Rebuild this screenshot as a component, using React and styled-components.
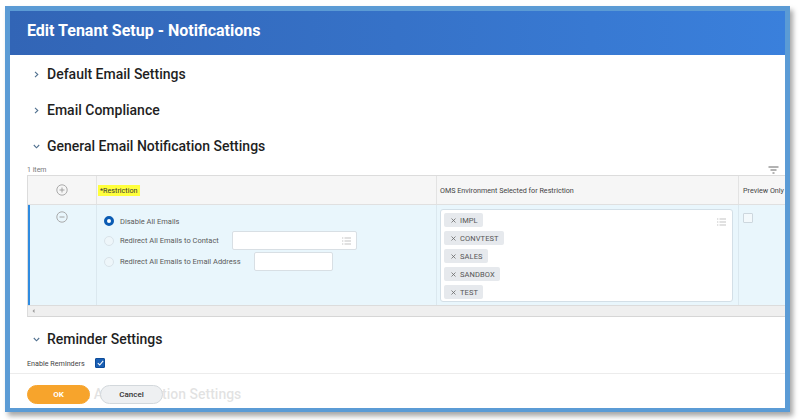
import React from "react";
import styled, { createGlobalStyle } from "styled-components";

const GlobalStyle = createGlobalStyle`
  html, body { margin: 0; padding: 0; background: #ffffff; }
  body { font-family: Roboto, "Liberation Sans", Arial, sans-serif; }
  * { box-sizing: border-box; }
`;

const Stage = styled.div`
  width: 799px;
  height: 420px;
  padding: 6px 0 0 5px;
  background: #ffffff;
  overflow: hidden;
`;

const Window = styled.div`
  width: 785px;
  height: 406px;
  border: 5px solid #5b9bd5;
  border-bottom-width: 4px;
  box-shadow: 3px 4px 5px rgba(0, 0, 0, 0.35);
  display: flex;
  flex-direction: column;
  overflow: hidden;
  background: #ffffff;
`;

const Header = styled.header`
  flex: none;
  height: 44px;
  padding-left: 17px;
  background: linear-gradient(90deg, #3265b6 0%, #3672c8 50%, #3a80dc 100%);
  color: #ffffff;
  font-size: 16px;
  font-weight: 700;
  line-height: 39px;
  white-space: nowrap;
`;

const Body = styled.main`
  flex: 1;
  position: relative;
  overflow: hidden;
  padding-top: 1px;
`;

const SectionHeader = styled.div`
  height: 36px;
  display: flex;
  align-items: center;
  padding-left: 20px;
  font-size: 14px;
  font-weight: 500;
  color: ${(p) => (p.$ghost ? "#333333" : "#1f1f1f")};
  white-space: nowrap;
`;

const ChevronBox = styled.span`
  width: 12px;
  margin-right: 5px;
  display: flex;
  justify-content: center;
  align-items: center;
`;

const ItemsBar = styled.div`
  height: 11px;
  margin-left: 17px;
  padding-right: 6px;
  display: flex;
  justify-content: space-between;
  align-items: center;
  font-size: 7px;
  color: #777777;
`;

const TableWrap = styled.div`
  margin-left: 17px;
  overflow: hidden;
  border-top: 1px solid #dcdcdc;
  border-left: 1px solid #dcdcdc;
  border-bottom: 1px solid #d6d6d6;
`;

const Grid = styled.div`
  display: grid;
  grid-template-columns: 68px 340px 302px 80px;
  width: 790px;
`;

const HeadRow = styled(Grid)`
  height: 29px;
  background: #f6f6f6;
  border-bottom: 1px solid #e0e0e0;
`;

const HeadCell = styled.div`
  display: flex;
  align-items: center;
  justify-content: ${(p) => (p.$center ? "center" : "flex-start")};
  padding-left: ${(p) => p.$pad || 0}px;
  border-left: ${(p) => (p.$first ? "none" : "1px solid #e3e3e3")};
  font-size: 7.2px;
  color: #444444;
  white-space: nowrap;
`;

const Highlight = styled.span`
  background: #ffff3c;
  padding: 1px 2px;
  color: #333333;
`;

const BodyRow = styled(Grid)`
  height: 100px;
  background: #e9f6fc;
  position: relative;
  box-shadow: inset 2px 0 0 #2f8be0;
`;

const BodyCell = styled.div`
  border-left: ${(p) => (p.$first ? "none" : "1px solid #dbe8ef")};
  padding: ${(p) => p.$pad};
  display: flex;
  flex-direction: column;
  align-items: ${(p) => (p.$center ? "center" : "flex-start")};
`;

const OptionList = styled.div`
  display: flex;
  flex-direction: column;
  gap: 2px;
`;

const Option = styled.div`
  height: ${(p) => p.$h}px;
  display: flex;
  align-items: center;
`;

const Radio = styled.span`
  width: 10px;
  height: 10px;
  border-radius: 50%;
  flex: none;
  margin-right: 6px;
  border: ${(p) => (p.$on ? "3px solid #0b5bb3" : "1px solid #d9e3e9")};
  background: ${(p) => (p.$on ? "#ffffff" : "#eef6fa")};
`;

const OptionLabel = styled.span`
  font-size: 7.5px;
  color: #5a5a5a;
  white-space: nowrap;
  margin-right: 13px;
`;

const TextInput = styled.div`
  width: ${(p) => p.$w}px;
  height: 19px;
  background: #ffffff;
  border: 1px solid #d8dfe4;
  border-radius: 2px;
  display: flex;
  align-items: center;
  justify-content: flex-end;
  padding-right: 5px;
`;

const MultiSelect = styled.div`
  width: 293px;
  height: 93px;
  background: #ffffff;
  border: 1px solid #d3dfe7;
  border-radius: 3px;
  padding: 3px 6px 3px 3px;
  display: flex;
  justify-content: space-between;
  align-items: flex-start;
`;

const ChipList = styled.div`
  display: flex;
  flex-direction: column;
  align-items: flex-start;
  gap: 4px;
`;

const Chip = styled.span`
  height: 14px;
  display: inline-flex;
  align-items: center;
  gap: 4px;
  padding: 0 5px 0 7px;
  background: #e6e9ed;
  border-radius: 2px;
  font-size: 7.5px;
  color: #555555;
  letter-spacing: 0.1px;
`;

const ListIconWrap = styled.span`
  margin-top: 5px;
  display: flex;
`;

const EmptyBox = styled.span`
  width: 10px;
  height: 10px;
  border: 1px solid #cdd7de;
  background: #f3f9fc;
  border-radius: 1px;
`;

const ScrollRow = styled.div`
  height: 11px;
  background: #efefef;
  border-top: 1px solid #dcdcdc;
  display: flex;
  align-items: center;
  padding-left: 4px;
`;

const ReminderBlock = styled.div`
  margin-top: 4px;
`;

const EnableRow = styled.div`
  height: 12px;
  margin-left: 17px;
  margin-bottom: 7px;
  display: flex;
  align-items: center;
`;

const FieldLabel = styled.span`
  width: 68px;
  font-size: 7.2px;
  color: #444444;
  white-space: nowrap;
`;

const CheckedBox = styled.span`
  width: 10px;
  height: 10px;
  background: #1a5fb4;
  border: 1px solid #0e4c99;
  border-radius: 1px;
  display: flex;
  align-items: center;
  justify-content: center;
`;

const Footer = styled.footer`
  position: absolute;
  left: 0;
  right: 0;
  bottom: 0;
  height: 35px;
  background: rgba(255, 255, 255, 0.86);
  border-top: 1px solid #ececec;
  padding: 11px 17px 0;
  display: flex;
  gap: 10px;
`;

const Button = styled.button`
  width: 63px;
  height: 19px;
  border-radius: 10px;
  font-family: Roboto, "Liberation Sans", Arial, sans-serif;
  font-size: 8px;
  font-weight: ${(p) => (p.$primary ? 700 : 500)};
  color: ${(p) => (p.$primary ? "#ffffff" : "#333333")};
  background: ${(p) => (p.$primary ? "#f7a42c" : "#eef0f2")};
  border: 1px solid ${(p) => (p.$primary ? "#f7a42c" : "#d3d8dc")};
  padding: 0;
  cursor: pointer;
`;

const ChevronRight = () => (
  <svg width="5" height="7" viewBox="0 0 5 7">
    <path d="M1 0.8 L3.8 3.5 L1 6.2" fill="none" stroke="#50708f" strokeWidth="1.1" />
  </svg>
);

const ChevronDown = () => (
  <svg width="7" height="5" viewBox="0 0 7 5">
    <path d="M0.8 1 L3.5 3.8 L6.2 1" fill="none" stroke="#50708f" strokeWidth="1.1" />
  </svg>
);

const CircleIcon = ({ plus }) => (
  <svg width="12" height="12" viewBox="0 0 12 12">
    <circle cx="6" cy="6" r="5.2" fill="none" stroke="#a2a2a2" strokeWidth="0.9" />
    <path d="M3.5 6 H8.5" stroke="#9a9a9a" strokeWidth="0.9" />
    {plus && <path d="M6 3.5 V8.5" stroke="#9a9a9a" strokeWidth="0.9" />}
  </svg>
);

const FilterIcon = () => (
  <svg width="11" height="8" viewBox="0 0 11 8">
    <path d="M0.5 1 H10.5 M2.5 4 H8.5 M4.5 7 H6.5" stroke="#666666" strokeWidth="1" />
  </svg>
);

const ListIcon = () => (
  <svg width="9" height="8" viewBox="0 0 9 8">
    <g fill="#c4c4c4">
      <rect x="0" y="0.5" width="1.3" height="1" />
      <rect x="0" y="3.5" width="1.3" height="1" />
      <rect x="0" y="6.5" width="1.3" height="1" />
      <rect x="2.5" y="0.5" width="6.5" height="1" />
      <rect x="2.5" y="3.5" width="6.5" height="1" />
      <rect x="2.5" y="6.5" width="6.5" height="1" />
    </g>
  </svg>
);

const XIcon = () => (
  <svg width="5" height="5" viewBox="0 0 5 5">
    <path d="M0.5 0.5 L4.5 4.5 M4.5 0.5 L0.5 4.5" stroke="#6a6a6a" strokeWidth="0.8" />
  </svg>
);

const CheckIcon = () => (
  <svg width="7" height="6" viewBox="0 0 7 6">
    <path d="M0.8 3.2 L2.7 5 L6.2 0.9" fill="none" stroke="#ffffff" strokeWidth="1.1" />
  </svg>
);

const ScrollArrow = () => (
  <svg width="3" height="4" viewBox="0 0 3 4">
    <path d="M2.5 0 L0.5 2 L2.5 4 Z" fill="#9a9a9a" />
  </svg>
);

const environments = ["IMPL", "CONVTEST", "SALES", "SANDBOX", "TEST"];

const Section = ({ title, open, ghost }) => (
  <SectionHeader $ghost={ghost}>
    <ChevronBox>{open ? <ChevronDown /> : <ChevronRight />}</ChevronBox>
    {title}
  </SectionHeader>
);

export default function App() {
  return (
    <>
      <GlobalStyle />
      <Stage>
        <Window>
          <Header>Edit Tenant Setup - Notifications</Header>
          <Body>
            <Section title="Default Email Settings" />
            <Section title="Email Compliance" />
            <Section title="General Email Notification Settings" open />
            <ItemsBar>
              <span>1 item</span>
              <FilterIcon />
            </ItemsBar>
            <TableWrap>
              <HeadRow>
                <HeadCell $first $center>
                  <CircleIcon plus />
                </HeadCell>
                <HeadCell $pad={1}>
                  <Highlight>*Restriction</Highlight>
                </HeadCell>
                <HeadCell $pad={3}>OMS Environment Selected for Restriction</HeadCell>
                <HeadCell $pad={4}>Preview Only</HeadCell>
              </HeadRow>
              <BodyRow>
                <BodyCell $first $center $pad="6px 0 0 0">
                  <CircleIcon />
                </BodyCell>
                <BodyCell $pad="8px 0 0 7px">
                  <OptionList>
                    <Option $h={16}>
                      <Radio $on />
                      <OptionLabel>Disable All Emails</OptionLabel>
                    </Option>
                    <Option $h={19}>
                      <Radio />
                      <OptionLabel>Redirect All Emails to Contact</OptionLabel>
                      <TextInput $w={125}>
                        <ListIcon />
                      </TextInput>
                    </Option>
                    <Option $h={19}>
                      <Radio />
                      <OptionLabel>Redirect All Emails to Email Address</OptionLabel>
                      <TextInput $w={79} />
                    </Option>
                  </OptionList>
                </BodyCell>
                <BodyCell $pad="4px 0 0 3px">
                  <MultiSelect>
                    <ChipList>
                      {environments.map((env) => (
                        <Chip key={env}>
                          <XIcon />
                          {env}
                        </Chip>
                      ))}
                    </ChipList>
                    <ListIconWrap>
                      <ListIcon />
                    </ListIconWrap>
                  </MultiSelect>
                </BodyCell>
                <BodyCell $pad="8px 0 0 4px">
                  <EmptyBox />
                </BodyCell>
              </BodyRow>
              <ScrollRow>
                <ScrollArrow />
              </ScrollRow>
            </TableWrap>
            <ReminderBlock>
              <Section title="Reminder Settings" open />
              <EnableRow>
                <FieldLabel>Enable Reminders</FieldLabel>
                <CheckedBox>
                  <CheckIcon />
                </CheckedBox>
              </EnableRow>
              <Section title="Tenant Administration Settings" open ghost />
            </ReminderBlock>
            <Footer>
              <Button $primary>OK</Button>
              <Button>Cancel</Button>
            </Footer>
          </Body>
        </Window>
      </Stage>
    </>
  );
}
